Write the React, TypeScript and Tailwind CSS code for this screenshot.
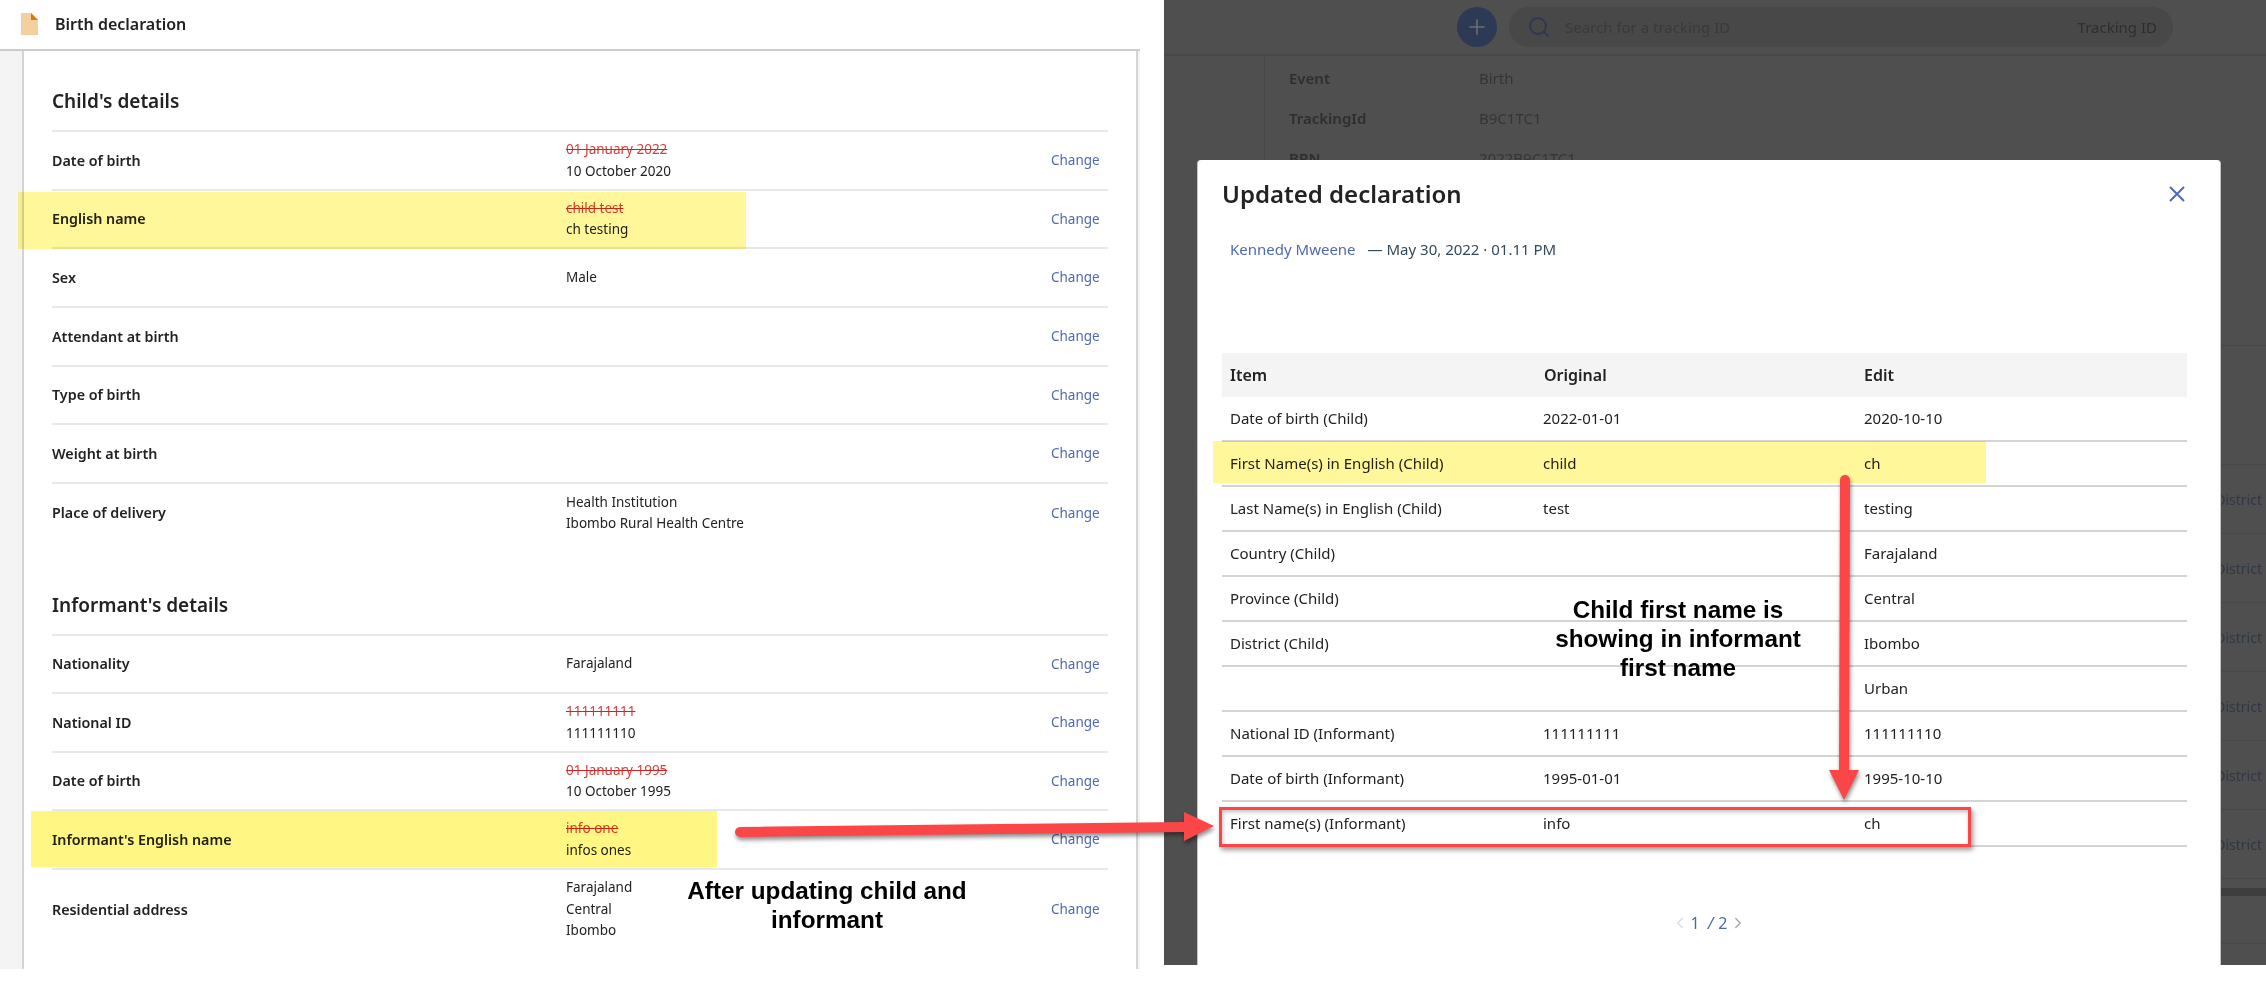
import { Search, Plus, ChevronLeft, ChevronRight } from "lucide-react";

type DetailRow = { label: string; old?: string; lines?: string[]; h: string };

const childRows: DetailRow[] = [
  { label: "Date of birth", old: "01 January 2022", lines: ["10 October 2020"], h: "h-[59px]" },
  { label: "English name", old: "child test", lines: ["ch testing"], h: "h-[58px]" },
  { label: "Sex", lines: ["Male"], h: "h-[59px]" },
  { label: "Attendant at birth", h: "h-[59px]" },
  { label: "Type of birth", h: "h-[58px]" },
  { label: "Weight at birth", h: "h-[59px]" },
  { label: "Place of delivery", lines: ["Health Institution", "Ibombo Rural Health Centre"], h: "h-[60px]" },
];

const informantRows: DetailRow[] = [
  { label: "Nationality", lines: ["Farajaland"], h: "h-[58px]" },
  { label: "National ID", old: "111111111", lines: ["111111110"], h: "h-[59px]" },
  { label: "Date of birth", old: "01 January 1995", lines: ["10 October 1995"], h: "h-[58px]" },
  { label: "Informant's English name", old: "info one", lines: ["infos ones"], h: "h-[59px]" },
  { label: "Residential address", lines: ["Farajaland", "Central", "Ibombo"], h: "h-[81px]" },
];

const tableRows = [
  ["Date of birth (Child)", "2022-01-01", "2020-10-10"],
  ["First Name(s) in English (Child)", "child", "ch"],
  ["Last Name(s) in English (Child)", "test", "testing"],
  ["Country (Child)", "", "Farajaland"],
  ["Province (Child)", "", "Central"],
  ["District (Child)", "", "Ibombo"],
  ["", "", "Urban"],
  ["National ID (Informant)", "111111111", "111111110"],
  ["Date of birth (Informant)", "1995-01-01", "1995-10-10"],
  ["First name(s) (Informant)", "info", "ch"],
];

function Detail({ row }: { row: DetailRow }) {
  return (
    <div className={`flex items-center border-t-2 border-[#e8e8e8] text-[13.5px] text-[#222] ${row.h}`}>
      <div className="w-[514px] text-[14.3px] font-semibold">{row.label}</div>
      <div className="flex-1 leading-[21.5px]">
        {row.old && <div className="text-[#d9403f] line-through decoration-[#c62828]">{row.old}</div>}
        {row.lines?.map((l) => <div key={l}>{l}</div>)}
      </div>
      <div className="w-[50px] mr-[7px] text-[#5069b5]">Change</div>
    </div>
  );
}

function DocIcon() {
  return (
    <svg width="17" height="22" viewBox="0 0 17 22">
      <path d="M0 0H10L17 7V22H0Z" fill="#f6cf9e" />
      <path d="M10 0L17 7H10Z" fill="#d4780f" />
    </svg>
  );
}

export default function App() {
  return (
    <div className="relative w-[2266px] h-[983px] overflow-hidden bg-white font-['Noto_Sans',sans-serif]">
      <div className="flex items-start">
        {/* Left: declaration review */}
        <div className="w-[1164px] h-[969px] shrink-0 flex flex-col">
          <div className="w-[1140px] h-[51px] shrink-0 flex items-center gap-[17px] pl-[21px] pb-[2px] border-b-2 border-[#cccccc]">
            <DocIcon />
            <span className="text-[16px] font-semibold text-[#222]">Birth declaration</span>
          </div>
          <div className="w-[1140px] flex-1 flex bg-[#f4f4f4] min-h-0">
            <div className="w-[22px] shrink-0" />
            <div className="w-[1116px] bg-white border-x-2 border-[#d4d4d4] px-[28px]">
              <div className="h-[79px] flex items-center text-[19px] font-semibold text-[#222] pt-[22px] pb-[1px]">Child's details</div>
              {childRows.map((r) => <Detail key={r.label} row={r} />)}
              <div className="h-[92px] flex items-end pb-[15px] text-[19px] font-semibold text-[#222]">Informant's details</div>
              {informantRows.map((r) => <Detail key={r.label} row={r} />)}
            </div>
          </div>
        </div>

        {/* Right: dimmed page with modal */}
        <div className="relative flex-1 h-[965px] overflow-hidden bg-[#4f4f4f] text-[15px]">
          <div className="h-[56px] flex items-center border-b-2 border-[#484848] pl-[293px] gap-[12px]">
            <div className="w-[40px] h-[40px] rounded-full bg-[#2c3a56] flex items-center justify-center text-[#6e6e6e]">
              <Plus size={24} strokeWidth={1.6} />
            </div>
            <div className="w-[664px] h-[40px] rounded-[20px] bg-[#484848] flex items-center pl-[18px] pr-[16px]">
              <Search size={24} strokeWidth={1.8} className="text-[#2e3855]" />
              <span className="ml-[14px] flex-1 text-[#3a3a3a]">Search for a tracking ID</span>
              <span className="text-[#2e2e2e]">Tracking ID</span>
            </div>
          </div>
          <div className="flex h-[909px]">
            <div className="w-[101px] shrink-0 border-r border-[#484848]" />
            <div className="flex-1 min-w-0">
              <div className="h-[290px] pl-[24px] pt-[2px] border-b border-[#484848] text-[#2e2e2e]">
                <div className="flex h-[40px] items-center"><span className="w-[190px] font-semibold">Event</span><span className="text-[#353535]">Birth</span></div>
                <div className="flex h-[40px] items-center"><span className="w-[190px] font-semibold">TrackingId</span><span className="text-[#353535]">B9C1TC1</span></div>
                <div className="flex h-[40px] items-center"><span className="w-[190px] font-semibold">BRN</span><span className="text-[#353535]">2022B9C1TC1</span></div>
              </div>
              <div className="h-[119px] border-b border-[#484848]" />
              {[0, 1, 2, 3, 4, 5].map((i) => (
                <div key={i} className="h-[69px] flex items-center justify-end pr-[4px] border-b border-[#484848] text-[14px] text-[#2f3845]">
                  District
                </div>
              ))}
              <div className="h-[8px] mt-[9px] bg-[#3e3e3e]" />
              <div className="h-[48px] border-b border-[#484848]" />
            </div>
          </div>

          {/* Modal */}
          <div className="absolute left-[33px] top-[160px] w-[1024px] bottom-0 bg-white rounded-t-[4px] border-x border-[#c4c4c4] pl-[24px] pr-[33px] text-[#222]">
            <div className="h-[67px] flex items-center justify-between">
              <span className="text-[24px] font-semibold">Updated declaration</span>
              <svg width="16" height="16" viewBox="0 0 16 16" className="mr-[2px]">
                <path d="M1 1L15 15M15 1L1 15" stroke="#4c68c1" strokeWidth="2" fill="none" />
              </svg>
            </div>
            <div className="h-[44px] flex items-center pl-[8px]">
              <span className="text-[#5069b5]">Kennedy Mweene</span>
              <span className="ml-[12px] text-[#35495d]">— May 30, 2022 · 01.11 PM</span>
            </div>
            <div className="h-[82px]" />
            <div className="h-[44px] flex items-center bg-[#f4f4f4] text-[16px] font-semibold">
              <div className="w-[321px] pl-[8px]">Item</div>
              <div className="w-[321px] pl-[1px]">Original</div>
              <div className="flex-1">Edit</div>
            </div>
            {tableRows.map((r, i) => (
              <div key={i} className="flex items-center h-[45px] border-b-2 border-[#d4d4d4] text-[#222]">
                <div className="w-[321px] pl-[8px]">{r[0]}</div>
                <div className="w-[321px]">{r[1]}</div>
                <div className="flex-1">{r[2]}</div>
              </div>
            ))}
            <div className="mt-[64px] flex items-center justify-center text-[16px] pl-[9px]">
              <ChevronLeft size={18} strokeWidth={2} className="text-[#dddddd]" />
              <span className="ml-[1px] text-[#4a6f8f]">1</span>
              <span className="ml-[8px] text-[#4c68c1] italic">/</span>
              <span className="ml-[5px] text-[#4c68c1]">2</span>
              <ChevronRight size={18} strokeWidth={2} className="ml-[1px] text-[#a8a8a8]" />
            </div>
          </div>
        </div>
      </div>

      {/* Yellow highlights */}
      <div className="absolute left-[18px] top-[192px] w-[728px] h-[57px] bg-[#fff799] mix-blend-multiply" />
      <div className="absolute left-[31px] top-[811px] w-[686px] h-[56px] bg-[#fff683] mix-blend-multiply" />
      <div className="absolute left-[1213px] top-[441px] w-[773px] h-[42px] bg-[#fff799] mix-blend-multiply" />

      {/* Red annotation box */}
      <div className="absolute left-[1219px] top-[807px] w-[752px] h-[40px] border-[3px] border-[#fb4648] shadow-[2px_3px_5px_rgba(0,0,0,0.4),inset_1px_2px_4px_rgba(0,0,0,0.25)]" />

      {/* Arrows */}
      <svg className="absolute left-0 top-0 pointer-events-none drop-shadow-[1px_3px_2px_rgba(0,0,0,0.45)]" width="2266" height="983" viewBox="0 0 2266 983">
        <path d="M740 832L1184 827" stroke="#fb4648" strokeWidth="10" strokeLinecap="round" fill="none" />
        <path d="M1184 812L1214 826L1184 841Z" fill="#fb4648" />
        <path d="M1845 480L1844 770" stroke="#fb4648" strokeWidth="10" strokeLinecap="round" fill="none" />
        <path d="M1829 770H1859L1844 800Z" fill="#fb4648" />
      </svg>

      {/* Annotation labels */}
      <div className="absolute left-[667px] top-[876px] w-[320px] text-center font-['Liberation_Sans',sans-serif] font-bold text-[24.3px] leading-[29px] text-black">
        After updating child and informant
      </div>
      <div className="absolute left-[1548px] top-[595px] w-[260px] text-center font-['Liberation_Sans',sans-serif] font-bold text-[24.3px] leading-[29px] text-black">
        Child first name is showing in informant first name
      </div>
    </div>
  );
}
